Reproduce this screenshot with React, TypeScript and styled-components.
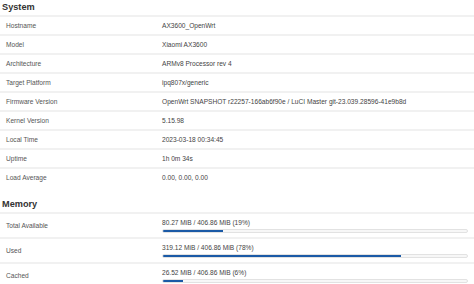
import React, { FC } from 'react';
import styled, { createGlobalStyle } from 'styled-components';

const GlobalStyle = createGlobalStyle`
	html, body {
		margin: 0;
		padding: 0;
		background: #fff;
	}
	body {
		font-family: 'Liberation Sans', Arial, sans-serif;
		color: #404040;
	}
`;

const Page = styled.div`
	display: flex;
	flex-direction: column;
	width: 474px;
	height: 284px;
	overflow: hidden;
`;

const Section = styled.section<{ $gap?: number }>`
	display: flex;
	flex-direction: column;
	margin-top: ${(p) => p.$gap ?? 0}px;
`;

const Heading = styled.h3`
	margin: 0;
	height: 15px;
	padding-left: 2px;
	font-size: 9.2px;
	line-height: 15px;
	font-weight: bold;
	color: #333;
`;

const Row = styled.div<{ $tall?: boolean }>`
	display: grid;
	grid-template-columns: 162px 1fr;
	align-items: center;
	height: ${(p) => (p.$tall ? 23 : 17)}px;
	border-top: 2px solid #f1f1f1;
	font-size: 6.6px;
`;

const Label = styled.div`
	padding-left: 6px;
	color: #555;
	white-space: nowrap;
`;

const Value = styled.div`
	padding-right: 6px;
	color: #444;
	white-space: nowrap;
`;

const BarText = styled.div`
	line-height: 8px;
	margin-bottom: 2px;
`;

const Track = styled.div`
	height: 4px;
	box-sizing: border-box;
	border: 1px solid #e2e2e2;
	border-radius: 2px;
	background: #f7f7f7;
	overflow: hidden;
`;

const Fill = styled.div`
	height: 100%;
	background: #1b5aa6;
`;

const systemRows = [
	['Hostname', 'AX3600_OpenWrt'],
	['Model', 'Xiaomi AX3600'],
	['Architecture', 'ARMv8 Processor rev 4'],
	['Target Platform', 'ipq807x/generic'],
	['Firmware Version', 'OpenWrt SNAPSHOT r22257-166ab6f90e / LuCI Master git-23.039.28596-41e9b8d'],
	['Kernel Version', '5.15.98'],
	['Local Time', '2023-03-18 00:34:45'],
	['Uptime', '1h 0m 34s'],
	['Load Average', '0.00, 0.00, 0.00'],
];

const memoryRows = [
	{ label: 'Total Available', used: 80.27, pct: 19 },
	{ label: 'Used', used: 319.12, pct: 78 },
	{ label: 'Cached', used: 26.52, pct: 6 },
];

const App: FC = () => {
	const total = 406.86;

	return (
		<>
			<GlobalStyle />
			<Page>
				<Section>
					<Heading>System</Heading>
					{systemRows.map(([k, v]) => (
						<Row key={k}>
							<Label>{k}</Label>
							<Value>{v}</Value>
						</Row>
					))}
				</Section>
				<Section $gap={11}>
					<Heading>Memory</Heading>
					{memoryRows.map((m) => (
						<Row key={m.label} $tall>
							<Label>{m.label}</Label>
							<Value>
								<BarText>
									{m.used.toFixed(2)} MiB / {total.toFixed(2)} MiB ({m.pct}%)
								</BarText>
								<Track>
									<Fill style={{ width: `${(m.used / total) * 100}%` }} />
								</Track>
							</Value>
						</Row>
					))}
				</Section>
			</Page>
		</>
	);
};

export default App;
